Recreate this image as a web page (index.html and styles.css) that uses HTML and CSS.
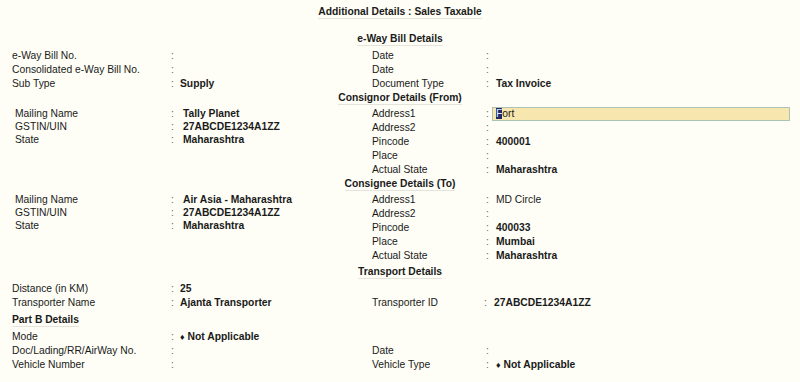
FILE: index.html
```html
<!DOCTYPE html>
<html lang="en">
<head>
    <meta charset="UTF-8">
    <meta name="viewport" content="width=device-width, initial-scale=1.0">
    <title>Additional Details : Sales Taxable</title>
    <link rel="stylesheet" href="styles.css">
</head>
<body>
    <div class="title"><span>Additional Details : Sales Taxable</span></div>

    <!-- e-Way Bill -->
    <div class="heading heading-first"><span>e-Way Bill Details</span></div>
    <div class="section">
        <div class="col left">
            <div class="row"><div class="label">e-Way Bill No.</div><div class="colon">:</div><div class="value"></div></div>
            <div class="row"><div class="label">Consolidated e-Way Bill No.</div><div class="colon">:</div><div class="value"></div></div>
            <div class="row"><div class="label">Sub Type</div><div class="colon">:</div><div class="value">Supply</div></div>
        </div>
        <div class="col right">
            <div class="row"><div class="label">Date</div><div class="colon">:</div><div class="value"></div></div>
            <div class="row"><div class="label">Date</div><div class="colon">:</div><div class="value"></div></div>
            <div class="row"><div class="label">Document Type</div><div class="colon">:</div><div class="value">Tax Invoice</div></div>
        </div>
    </div>

    <!-- Consignor -->
    <div class="heading"><span>Consignor Details (From)</span></div>
    <div class="section party">
        <div class="col left">
            <div class="row"><div class="label">Mailing Name</div><div class="colon">:</div><div class="value">Tally Planet</div></div>
            <div class="row"><div class="label">GSTIN/UIN</div><div class="colon">:</div><div class="value">27ABCDE1234A1ZZ</div></div>
            <div class="row"><div class="label">State</div><div class="colon">:</div><div class="value">Maharashtra</div></div>
        </div>
        <div class="col right">
            <div class="row"><div class="label">Address1</div><div class="colon">:</div><div class="value"><div class="field"><span class="cursor">F</span>ort</div></div></div>
            <div class="row"><div class="label">Address2</div><div class="colon">:</div><div class="value"></div></div>
            <div class="row"><div class="label">Pincode</div><div class="colon">:</div><div class="value">400001</div></div>
            <div class="row"><div class="label">Place</div><div class="colon">:</div><div class="value"></div></div>
            <div class="row"><div class="label">Actual State</div><div class="colon">:</div><div class="value">Maharashtra</div></div>
        </div>
    </div>

    <!-- Consignee -->
    <div class="heading"><span>Consignee Details (To)</span></div>
    <div class="section party">
        <div class="col left">
            <div class="row"><div class="label">Mailing Name</div><div class="colon">:</div><div class="value">Air Asia - Maharashtra</div></div>
            <div class="row"><div class="label">GSTIN/UIN</div><div class="colon">:</div><div class="value">27ABCDE1234A1ZZ</div></div>
            <div class="row"><div class="label">State</div><div class="colon">:</div><div class="value">Maharashtra</div></div>
        </div>
        <div class="col right">
            <div class="row"><div class="label">Address1</div><div class="colon">:</div><div class="value plain">MD Circle</div></div>
            <div class="row"><div class="label">Address2</div><div class="colon">:</div><div class="value"></div></div>
            <div class="row"><div class="label">Pincode</div><div class="colon">:</div><div class="value">400033</div></div>
            <div class="row"><div class="label">Place</div><div class="colon">:</div><div class="value">Mumbai</div></div>
            <div class="row"><div class="label">Actual State</div><div class="colon">:</div><div class="value">Maharashtra</div></div>
        </div>
    </div>

    <!-- Transport -->
    <div class="heading heading-transport"><span>Transport Details</span></div>
    <div class="section">
        <div class="col left">
            <div class="row"><div class="label">Distance (in KM)</div><div class="colon">:</div><div class="value">25</div></div>
            <div class="row"><div class="label">Transporter Name</div><div class="colon">:</div><div class="value">Ajanta Transporter</div></div>
        </div>
        <div class="col right">
            <div class="row"><div class="label">&nbsp;</div></div>
            <div class="row transporter-id"><div class="label">Transporter ID</div><div class="colon">:</div><div class="value">27ABCDE1234A1ZZ</div></div>
        </div>
    </div>

    <!-- Part B -->
    <div class="heading heading-left"><span>Part B Details</span></div>
    <div class="section">
        <div class="col left">
            <div class="row"><div class="label">Mode</div><div class="colon">:</div><div class="value"><span class="diamond">&#9830;</span>Not Applicable</div></div>
            <div class="row"><div class="label">Doc/Lading/RR/AirWay No.</div><div class="colon">:</div><div class="value"></div></div>
            <div class="row"><div class="label">Vehicle Number</div><div class="colon">:</div><div class="value"></div></div>
        </div>
        <div class="col right">
            <div class="row"><div class="label">&nbsp;</div></div>
            <div class="row"><div class="label">Date</div><div class="colon">:</div><div class="value"></div></div>
            <div class="row"><div class="label">Vehicle Type</div><div class="colon">:</div><div class="value"><span class="diamond">&#9830;</span>Not Applicable</div></div>
        </div>
    </div>
</body>
</html>
```

FILE: styles.css
```css
body {
    font-family: "Liberation Sans", Arial, sans-serif;
    font-size: 10.3px;
    line-height: 14px;
    margin: 0;
    padding: 5px 0 0 12px;
    color: #1a1a1a;
    background-color: #fefef6; /* Tally cream background */
}
.title, .heading {
    font-weight: bold;
    text-align: center;
    padding-right: 12px;
    height: 14px;
    margin-bottom: 2px;
}
.title span, .heading span {
    display: inline-block;
    height: 13px;
    border-bottom: 1px solid #e4e4dc; /* faint underline */
}
.title {
    margin-bottom: 0;
}
.heading-first {
    margin-top: 13px;
}
.heading-transport {
    margin-top: 2px;
}
.heading-left {
    text-align: left;
    margin-top: 3px;
}
.section {
    display: flex;
    padding-top: 1px;
}
.section.party {
    padding-top: 0;
}
.col.left {
    width: 360px;
}
.col.right {
    flex: 1;
    padding-right: 10px;
}
.row {
    display: flex;
    height: 14px;
    white-space: nowrap;
}
.party .left .row {
    height: 13px;
}
.label {
    width: 159px;
}
.colon {
    width: 9px;
    color: #6a6a6a;
}
.value {
    flex: 1;
    font-weight: bold;
}
.value.plain {
    font-weight: normal;
}
.party .left .label {
    width: 156px;
    padding-left: 3px;
}
.party .left .colon {
    width: 12px;
}
.right .label {
    width: 114px;
}
.right .colon {
    width: 10px;
}
.transporter-id .colon {
    margin-left: -2px;
}
.field {
    margin-left: -4px;
    height: 12px;
    line-height: 12px;
    padding-left: 3px;
    font-weight: normal;
    background-color: #f7e7ae; /* edit field */
    border: 1px solid #aac3b6;
}
.cursor {
    background-color: #1d2b68;
    color: #e8e8ff;
}
.diamond {
    font-size: 9px;
    margin: 0 3px 0 0;
}
```
